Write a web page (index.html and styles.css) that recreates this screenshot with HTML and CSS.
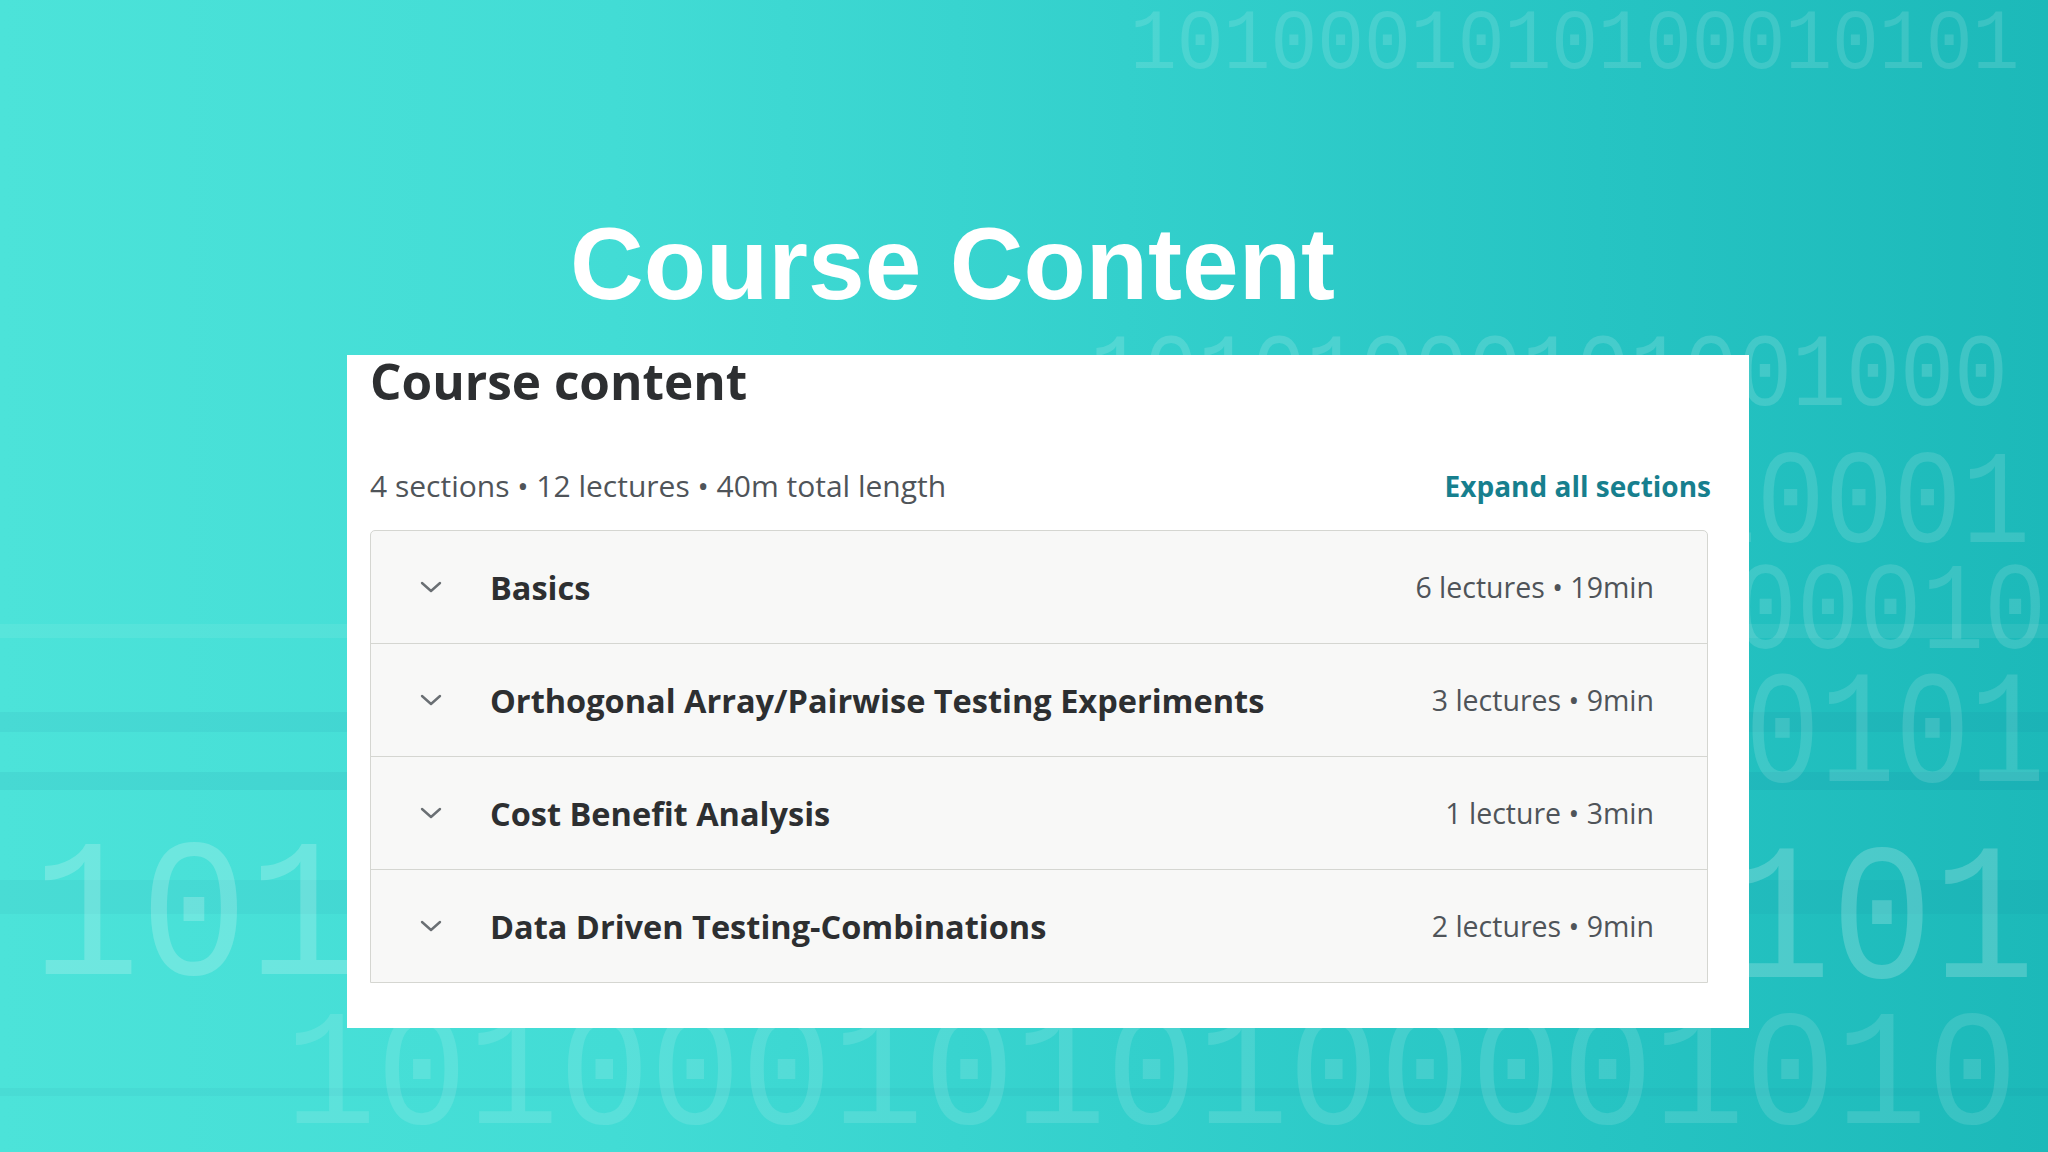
FILE: index.html
```html
<!DOCTYPE html>
<html lang="en">
<head>
<meta charset="utf-8">
<title>Course Content</title>
<link rel="stylesheet" href="styles.css">
</head>
<body>
<div class="backdrop" aria-hidden="true">
  <div class="stripe stripe-a"></div>
  <div class="stripe stripe-b"></div>
  <div class="stripe stripe-c"></div>
  <div class="stripe stripe-d"></div>
  <div class="stripe stripe-e"></div>
  <div class="bits bits-1">1010001010100010101</div>
  <div class="bits bits-2">101010001010</div>
  <div class="bits bits-2b">01000</div>
  <div class="bits bits-3">10001</div>
  <div class="bits bits-4">000010</div>
  <div class="bits bits-5">00101</div>
  <div class="bits bits-6">101</div>
  <div class="bits bits-6b">101</div>
  <div class="bits bits-7">1010001010100001010</div>
</div>

<main class="stage">
  <h1 class="slide-title">Course Content</h1>

  <section class="card">
    <h2 class="card-heading">Course content</h2>
    <div class="summary">
      <span class="summary-text">4 sections • 12 lectures • 40m total length</span>
      <span class="expand-link">Expand all sections</span>
    </div>

    <div class="sections">
      <div class="section-row">
        <svg class="chevron" viewBox="0 0 22 12" width="22" height="12"><path d="M2 2 L11 10 L20 2"/></svg>
        <span class="section-title">Basics</span>
        <span class="section-meta">6 lectures • 19min</span>
      </div>
      <div class="section-row">
        <svg class="chevron" viewBox="0 0 22 12" width="22" height="12"><path d="M2 2 L11 10 L20 2"/></svg>
        <span class="section-title">Orthogonal Array/Pairwise Testing Experiments</span>
        <span class="section-meta">3 lectures • 9min</span>
      </div>
      <div class="section-row">
        <svg class="chevron" viewBox="0 0 22 12" width="22" height="12"><path d="M2 2 L11 10 L20 2"/></svg>
        <span class="section-title">Cost Benefit Analysis</span>
        <span class="section-meta">1 lecture • 3min</span>
      </div>
      <div class="section-row">
        <svg class="chevron" viewBox="0 0 22 12" width="22" height="12"><path d="M2 2 L11 10 L20 2"/></svg>
        <span class="section-title">Data Driven Testing-Combinations</span>
        <span class="section-meta">2 lectures • 9min</span>
      </div>
    </div>
  </section>
</main>
</body>
</html>
```

FILE: styles.css
```css
html, body {
  margin: 0;
  padding: 0;
}

body {
  width: 2048px;
  height: 1152px;
  overflow: hidden;
  position: relative;
  background: linear-gradient(90deg, #4ce3d9 0%, #42dcd5 30%, #33d0cc 55%, #26c4c3 78%, #1cb9b9 100%);
  font-family: "Open Sans", "Noto Sans", sans-serif;
}

/* decorative binary backdrop */
.backdrop {
  position: absolute;
  inset: 0;
  overflow: hidden;
}

.stripe {
  position: absolute;
  left: 0;
  right: 0;
}
.stripe-a { top: 624px; height: 14px; background: rgba(255, 255, 255, 0.07); }
.stripe-b { top: 712px; height: 20px; background: rgba(20, 90, 140, 0.06); }
.stripe-c { top: 772px; height: 18px; background: rgba(20, 90, 140, 0.07); }
.stripe-d { top: 880px; height: 34px; background: rgba(20, 90, 140, 0.05); }
.stripe-e { top: 1088px; height: 8px; background: rgba(20, 90, 140, 0.05); }

.bits {
  position: absolute;
  font-family: "Liberation Mono", "DejaVu Sans Mono", monospace;
  line-height: 0.75;
  white-space: nowrap;
  color: rgba(255, 255, 255, 0.13);
  transform-origin: 0 0;
}
.bits-1 { left: 1130px; top: 13px; font-size: 78px; transform: scaleY(1.09); }
.bits-2 { left: 1090px; top: 339px; font-size: 90px; transform: scaleY(1.15); color: rgba(255, 255, 255, 0.15); }
.bits-2b { left: 1738px; top: 339px; font-size: 90px; transform: scaleY(1.15); color: rgba(255, 255, 255, 0.15); }
.bits-3 { left: 1688px; top: 456px; font-size: 114px; transform: scaleY(1.18); }
.bits-4 { left: 1672px; top: 568px; font-size: 104px; transform: scaleY(1.2); }
.bits-5 { left: 1670px; top: 679px; font-size: 125px; transform: scaleY(1.29); }
.bits-6 { left: 32px; top: 849px; font-size: 180px; transform: scaleY(1.09); color: rgba(255, 255, 255, 0.2); }
.bits-6b { left: 1729px; top: 852px; font-size: 170px; transform: scaleY(1.15); color: rgba(255, 255, 255, 0.2); }
.bits-7 { left: 285px; top: 1017px; font-size: 152px; transform: scaleY(1.09); color: rgba(255, 255, 255, 0.12); }

/* foreground */
.stage {
  position: relative;
  padding-top: 206px;
  display: flex;
  flex-direction: column;
  align-items: flex-start;
}

.slide-title {
  margin: 0 0 32px 570px;
  font-family: "Liberation Sans", Arial, sans-serif;
  font-weight: 700;
  font-size: 102px;
  line-height: 117px;
  color: #ffffff;
}

.card {
  margin-left: 347px;
  width: 1402px;
  box-sizing: border-box;
  background: #ffffff;
  padding: 0 41px 45px 23px;
}

.card-heading {
  margin: 0;
  font-size: 49.5px;
  line-height: 52px;
  font-weight: 700;
  color: #2d2f31;
}

.summary {
  margin-top: 61px;
  display: flex;
  justify-content: space-between;
  align-items: baseline;
  line-height: 36px;
}

.summary-text {
  font-size: 30px;
  color: #4f5459;
}

.expand-link {
  font-size: 28px;
  font-weight: 700;
  color: #177f8e;
  margin-right: -3px;
}

.sections {
  margin-top: 26px;
  border: 1px solid #d5d6d1;
  border-radius: 5px 5px 0 0;
  background: #f8f8f7;
}

.section-row {
  height: 112px;
  display: flex;
  align-items: center;
  padding: 0 53px 0 49px;
}

.section-row + .section-row {
  border-top: 1px solid #d5d6d1;
}

.chevron {
  flex: none;
  fill: none;
  stroke: #6a6f73;
  stroke-width: 2.4;
  stroke-linecap: round;
  stroke-linejoin: round;
  margin-right: 48px;
}

.section-title {
  flex: 1;
  font-size: 32.5px;
  font-weight: 700;
  color: #2d2f31;
}

.section-meta {
  flex: none;
  font-size: 28.5px;
  color: #4f5459;
}
```
